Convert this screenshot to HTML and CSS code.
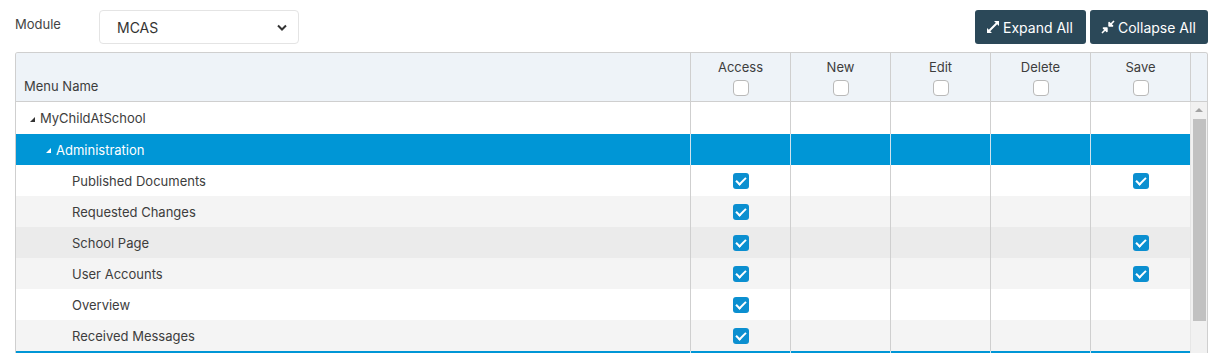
FILE: index.html
```html
<!DOCTYPE html>
<html>
<head>
<meta charset="utf-8">
<link rel="stylesheet" href="styles.css">
</head>
<body>
<div class="page">
  <div class="toolbar">
    <div class="module">
      <span class="module-label">Module</span>
      <div class="select">
        <span>MCAS</span>
        <svg class="chev" width="10" height="7" viewBox="0 0 10 7"><path d="M1 1.5 L5 5.5 L9 1.5" fill="none" stroke="#333" stroke-width="2"/></svg>
      </div>
    </div>
    <div class="buttons">
      <button class="btn btn-expand">
        <svg width="14" height="14" viewBox="0 0 14 14"><path d="M8 1 H13 V6 L11.2 4.2 L4.2 11.2 L6 13 H1 V8 L2.8 9.8 L9.8 2.8 Z" fill="#fff"/></svg>
        Expand All
      </button>
      <button class="btn btn-collapse">
        <svg width="14" height="14" viewBox="0 0 14 14"><path d="M13 1 L9.8 4.2 L11.5 5.9 H8.1 V2.5 L9.8 4.2 M1 13 L4.2 9.8 L2.5 8.1 H5.9 V11.5 L4.2 9.8" fill="#fff" stroke="#fff" stroke-width="1.6" stroke-linejoin="round"/></svg>
        Collapse All
      </button>
    </div>
  </div>

  <div class="grid">
    <div class="grid-head">
      <div class="hcell hname">Menu Name</div>
      <div class="hcell hperm"><span>Access</span><i class="cb"></i></div>
      <div class="hcell hperm"><span>New</span><i class="cb"></i></div>
      <div class="hcell hperm"><span>Edit</span><i class="cb"></i></div>
      <div class="hcell hperm"><span>Delete</span><i class="cb"></i></div>
      <div class="hcell hperm"><span>Save</span><i class="cb"></i></div>
      <div class="hcell hscroll"></div>
    </div>
    <div class="grid-body">
      <div class="rows">
        <div class="row first">
          <div class="cell name lvl0"><i class="tri"></i>MyChildAtSchool</div>
          <div class="cell"></div><div class="cell"></div><div class="cell"></div><div class="cell"></div><div class="cell"></div>
        </div>
        <div class="row selected">
          <div class="cell name lvl1"><i class="tri"></i>Administration</div>
          <div class="cell"></div><div class="cell"></div><div class="cell"></div><div class="cell"></div><div class="cell"></div>
        </div>
        <div class="row">
          <div class="cell name lvl2">Published Documents</div>
          <div class="cell"><i class="cb on"></i></div><div class="cell"></div><div class="cell"></div><div class="cell"></div><div class="cell"><i class="cb on"></i></div>
        </div>
        <div class="row alt">
          <div class="cell name lvl2">Requested Changes</div>
          <div class="cell"><i class="cb on"></i></div><div class="cell"></div><div class="cell"></div><div class="cell"></div><div class="cell"></div>
        </div>
        <div class="row hover">
          <div class="cell name lvl2">School Page</div>
          <div class="cell"><i class="cb on"></i></div><div class="cell"></div><div class="cell"></div><div class="cell"></div><div class="cell"><i class="cb on"></i></div>
        </div>
        <div class="row alt">
          <div class="cell name lvl2">User Accounts</div>
          <div class="cell"><i class="cb on"></i></div><div class="cell"></div><div class="cell"></div><div class="cell"></div><div class="cell"><i class="cb on"></i></div>
        </div>
        <div class="row">
          <div class="cell name lvl2">Overview</div>
          <div class="cell"><i class="cb on"></i></div><div class="cell"></div><div class="cell"></div><div class="cell"></div><div class="cell"></div>
        </div>
        <div class="row alt">
          <div class="cell name lvl2">Received Messages</div>
          <div class="cell"><i class="cb on"></i></div><div class="cell"></div><div class="cell"></div><div class="cell"></div><div class="cell"></div>
        </div>
        <div class="row selected">
          <div class="cell name lvl1"></div>
          <div class="cell"></div><div class="cell"></div><div class="cell"></div><div class="cell"></div><div class="cell"></div>
        </div>
      </div>
      <div class="scrollbar">
        <div class="sb-up"></div>
        <div class="sb-thumb"></div>
      </div>
    </div>
  </div>
</div>
</body>
</html>
```

FILE: styles.css
```css
* { box-sizing: border-box; }
html, body { margin: 0; padding: 0; background: #fff; }
body {
  font-family: "Inter", "Liberation Sans", sans-serif;
  font-size: 13px;
  color: #3d3d3d;
  overflow: hidden;
  height: 353px;
}
.page { padding: 10px 10px 0 15px; }

.toolbar {
  display: flex;
  justify-content: space-between;
  align-items: flex-start;
  height: 42px;
}
.module { display: flex; align-items: flex-start; }
.module-label {
  width: 84px;
  padding-top: 6px;
  font-size: 13px;
  color: #444;
}
.select {
  width: 200px;
  height: 34px;
  border: 1px solid #e4e4e4;
  border-radius: 4px;
  display: flex;
  align-items: center;
  justify-content: space-between;
  padding: 0 11px 0 17px;
  font-size: 14px;
  color: #333;
}
.select span { padding-top: 1px; }

.buttons { display: flex; gap: 4px; }
.btn {
  height: 34px;
  border: none;
  border-radius: 3px;
  background: #2b4858;
  color: #fff;
  font-family: "Inter", "Liberation Sans", sans-serif;
  font-size: 14px;
  display: flex;
  align-items: center;
  gap: 3px;
  padding: 0 0 0 11px;
}
.btn-expand { width: 111px; }
.btn-collapse { width: 118px; gap: 3px; padding-left: 11px; }

.grid {
  border: 1px solid #cfcfcf;
  border-bottom: none;
  border-radius: 3px 3px 0 0;
  width: 1193px;
  overflow: hidden;
}
.grid-head {
  display: grid;
  grid-template-columns: 674px repeat(5, 100px) 17px;
  background: #eef3f8;
  border-bottom: 1px solid #cfcfcf;
  height: 49px;
}
.hcell { height: 48px; }
.hname {
  display: flex;
  align-items: flex-end;
  padding: 0 0 7px 8px;
  font-size: 13px;
  color: #3d3d3d;
}
.hperm {
  border-left: 1px solid #cfcfcf;
  display: flex;
  flex-direction: column;
  align-items: center;
  padding-top: 6px;
  gap: 5px;
  font-size: 13px;
  color: #3d3d3d;
}
.hperm span { line-height: 16px; }
.hscroll { border-left: 1px solid #cfcfcf; }

.cb {
  display: block;
  width: 16px;
  height: 16px;
  border: 1px solid #b9b9b9;
  border-radius: 4px;
  background: #fff;
}
.cb.on {
  border: none;
  background: #0b8fd0;
  position: relative;
  border-radius: 3px;
}
.cb.on::after {
  content: "";
  position: absolute;
  left: 5px;
  top: 2px;
  width: 4px;
  height: 8px;
  border-right: 2px solid #fff;
  border-bottom: 2px solid #fff;
  transform: rotate(45deg);
}

.grid-body {
  display: flex;
  height: 251px;
  overflow: hidden;
}
.rows { width: 1174px; }
.row {
  display: grid;
  grid-template-columns: 674px repeat(5, 100px);
  height: 31px;
  background: #fff;
}
.row.first { height: 32px; }
.row.alt { background: #f4f4f4; }
.row.hover { background: #ebebeb; }
.row.selected { background: #0096d6; color: #fff; }
.cell {
  border-left: 1px solid #cfcfcf;
  display: flex;
  align-items: center;
  justify-content: center;
}
.row.selected .cell { border-left-color: #cfe3ee; }
.cell.name {
  border-left: none;
  justify-content: flex-start;
  font-size: 13px;
}
.lvl0 { padding-left: 14px; }
.lvl1 { padding-left: 30px; }
.lvl2 { padding-left: 56px; }
.tri {
  display: block;
  width: 0;
  height: 0;
  border-left: 5px solid transparent;
  border-bottom: 5px solid #333;
  margin: 2px 5px 0 0;
}
.row.selected .tri { border-bottom-color: #fff; }

.scrollbar {
  width: 17px;
  background: #f1f1f1;
  border-left: 1px solid #e6e6e6;
  display: flex;
  flex-direction: column;
  align-items: center;
}
.sb-up {
  width: 0;
  height: 0;
  border-left: 4px solid transparent;
  border-right: 4px solid transparent;
  border-bottom: 4px solid #a3a3a3;
  margin-top: 6px;
}
.sb-thumb {
  width: 13px;
  height: 202px;
  background: #c1c1c1;
  margin-top: 7px;
}
```
